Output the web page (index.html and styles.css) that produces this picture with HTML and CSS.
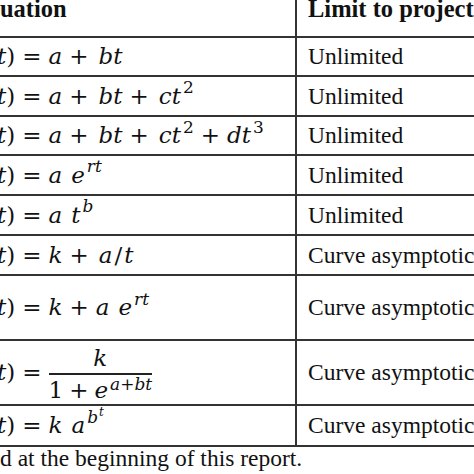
FILE: index.html
```html
<!DOCTYPE html>
<html>
<head>
<meta charset="utf-8">
<link rel="stylesheet" href="styles.css">
</head>
<body>
<div class="sheet">
  <div class="row head">
    <div class="c1"><span class="htext">Equation</span></div>
    <div class="c2"><span class="htext">Limit to projection</span></div>
  </div>
  <div class="row r39">
    <div class="c1"><div class="eq"><i>y</i>(<i>t</i>)<span class="op">=</span><i>a</i><span class="op op2">+</span><i>b</i><i>t</i></div></div>
    <div class="c2">Unlimited</div>
  </div>
  <div class="row r40">
    <div class="c1"><div class="eq"><i>y</i>(<i>t</i>)<span class="op">=</span><i>a</i><span class="op op2">+</span><i>b</i><i>t</i><span class="op op2">+</span><i>c</i><i>t</i><sup>2</sup></div></div>
    <div class="c2">Unlimited</div>
  </div>
  <div class="row r39">
    <div class="c1"><div class="eq"><i>y</i>(<i>t</i>)<span class="op">=</span><i>a</i><span class="op op2">+</span><i>b</i><i>t</i><span class="op op2">+</span><i>c</i><i>t</i><sup>2</sup><span class="op">+</span><i>d</i><i>t</i><sup>3</sup></div></div>
    <div class="c2">Unlimited</div>
  </div>
  <div class="row r40">
    <div class="c1"><div class="eq"><i>y</i>(<i>t</i>)<span class="op">=</span><i>a</i><span class="gap"></span><i>e</i><sup><i>r</i><i>t</i></sup></div></div>
    <div class="c2">Unlimited</div>
  </div>
  <div class="row r40">
    <div class="c1"><div class="eq"><i>y</i>(<i>t</i>)<span class="op">=</span><i>a</i><span class="gap"></span><i>t</i><sup><i>b</i></sup></div></div>
    <div class="c2">Unlimited</div>
  </div>
  <div class="row r40">
    <div class="c1"><div class="eq"><i>y</i>(<i>t</i>)<span class="op">=</span><i>k</i><span class="op op2">+</span><i>a</i><span class="sl">/</span><i>t</i></div></div>
    <div class="c2">Curve asymptotic to k</div>
  </div>
  <div class="row r65">
    <div class="c1"><div class="eq"><i>y</i>(<i>t</i>)<span class="op">=</span><i>k</i><span class="op">+</span><i>a</i><span class="gap"></span><i>e</i><sup><i>r</i><i>t</i></sup></div></div>
    <div class="c2">Curve asymptotic to k</div>
  </div>
  <div class="row r65">
    <div class="c1"><div class="eq fr"><span class="lhs"><i>y</i>(<i>t</i>)<span class="op">=</span></span><span class="frac"><span class="num"><i>k</i></span><span class="den">1<span class="op">+</span><i>e</i><sup><i>a</i>+<i>b</i><i>t</i></sup></span></span></div></div>
    <div class="c2">Curve asymptotic to k</div>
  </div>
  <div class="row r41">
    <div class="c1"><div class="eq"><i>y</i>(<i>t</i>)<span class="op">=</span><i>k</i><span class="gap"></span><i>a</i><sup><i>b</i><sup class="ss"><i>t</i></sup></sup></div></div>
    <div class="c2">Curve asymptotic to k</div>
  </div>
  <p class="note">d at the beginning of this report.</p>
</div>
</body>
</html>
```

FILE: styles.css
```css
html, body {
  margin: 0;
  padding: 0;
  background: #ffffff;
  overflow: hidden;
}
body {
  width: 474px;
  height: 474px;
  font-family: "Liberation Serif", "Times New Roman", serif;
  color: #111;
}
.sheet {
  margin: -18px 0 0 -60px;
  width: 640px;
  white-space: nowrap;
}
.row {
  display: flex;
  box-sizing: border-box;
  border-bottom: 2px solid #333;
}
.head { height: 56px; }
.r39 { height: 39px; }
.r40 { height: 40px; }
.r41 { height: 41px; }
.r65 { height: 65px; }
.c1 {
  flex: none;
  width: 357px;
  box-sizing: border-box;
  border-right: 2px solid #333;
  display: flex;
  align-items: center;
  padding-left: 35px;
}
.c2 {
  flex: 1;
  display: flex;
  align-items: center;
  padding-left: 11px;
  font-size: 23.5px;
}
.head .c1 { padding-left: 30px; }
.htext {
  font-weight: bold;
  font-size: 24.5px;
}
.eq {
  font-family: "DejaVu Serif", serif;
  font-size: 23px;
  line-height: 1;
  display: flex;
  align-items: baseline;
}
.eq.fr { align-items: center; }
.eq i { font-style: italic; }
.op { margin: 0 7px; }
.op2 { margin-right: 10px; }
.sl { margin: 0 2px; }
.gap { display: inline-block; width: 9px; }
sup {
  font-size: 17px;
  line-height: 0;
  position: relative;
  top: -0.6em;
  vertical-align: baseline;
  margin-left: 2px;
}
sup.ss {
  font-size: 12px;
  top: -0.55em;
  margin-left: 1px;
}
.frac {
  display: inline-flex;
  flex-direction: column;
  align-items: center;
  margin-top: 4px;
}
.num {
  padding-bottom: 3px;
}
.den {
  border-top: 2px solid #222;
  padding-top: 4px;
  display: flex;
  align-items: baseline;
}
.den .op { margin: 0 6px; }
.den sup { top: -0.45em; }
.note {
  margin: -2px 0 0 60px;
  font-size: 23.5px;
  line-height: 26px;
}
```
